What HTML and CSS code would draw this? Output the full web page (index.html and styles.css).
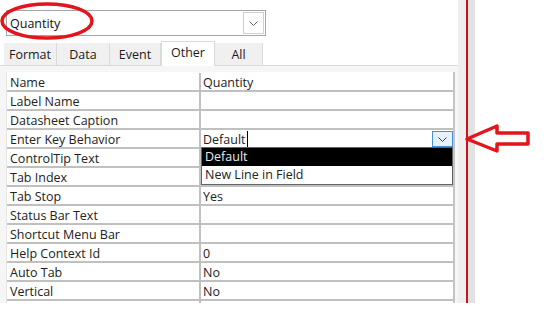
FILE: index.html
```html
<!DOCTYPE html>
<html lang="en">
  <head>
    <meta charset="UTF-8" />
    <title>Property Sheet - Other</title>
    <link rel="stylesheet" href="styles.css">
  </head>
  <body>
    <div class="page">
      <section class="panel">
        <!-- selector del control -->
        <div class="combo">
          <span class="combo-text">Quantity</span>
          <span class="combo-btn">
            <svg width="9" height="5" viewBox="0 0 9 5"><polyline points="0.5,0.5 4.5,4.5 8.5,0.5" fill="none" stroke="#606060" stroke-width="1"/></svg>
          </span>
        </div>
        <nav class="tabs">
          <a class="tab">Format</a>
          <a class="tab">Data</a>
          <a class="tab">Event</a>
          <a class="tab active">Other</a>
          <a class="tab">All</a>
        </nav>
        <div class="sheet">
          <div class="grid">
            <div class="row first"><div class="label">Name</div><div class="value">Quantity</div></div>
            <div class="row"><div class="label">Label Name</div><div class="value"></div></div>
            <div class="row"><div class="label">Datasheet Caption</div><div class="value"></div></div>
            <div class="row open">
              <div class="label">Enter Key Behavior</div>
              <div class="value">
                <span class="caret">Default</span>
                <span class="drop-btn">
                  <svg width="9" height="5" viewBox="0 0 9 5"><polyline points="0.5,0.5 4.5,4.5 8.5,0.5" fill="none" stroke="#404040" stroke-width="1"/></svg>
                </span>
                <ul class="drop-list">
                  <li class="selected">Default</li>
                  <li>New Line in Field</li>
                </ul>
              </div>
            </div>
            <div class="row"><div class="label">ControlTip Text</div><div class="value"></div></div>
            <div class="row"><div class="label">Tab Index</div><div class="value"></div></div>
            <div class="row"><div class="label">Tab Stop</div><div class="value">Yes</div></div>
            <div class="row"><div class="label">Status Bar Text</div><div class="value"></div></div>
            <div class="row"><div class="label">Shortcut Menu Bar</div><div class="value"></div></div>
            <div class="row"><div class="label">Help Context Id</div><div class="value">0</div></div>
            <div class="row"><div class="label">Auto Tab</div><div class="value">No</div></div>
            <div class="row"><div class="label">Vertical</div><div class="value">No</div></div>
            <div class="row"><div class="label"></div><div class="value"></div></div>
          </div>
        </div>
      </section>
      <div class="strip"></div>
    </div>
    <!-- anotaciones en rojo -->
    <svg class="marks" width="550" height="316" viewBox="0 0 550 316">
      <ellipse cx="47" cy="21" rx="45" ry="17" fill="none" stroke="#e3141b" stroke-width="3.5"/>
      <polygon points="467,139 497,126 497,133 528,133 528,144 497,144 497,151" fill="none" stroke="#e3141b" stroke-width="3.5" stroke-linejoin="round"/>
    </svg>
  </body>
</html>
```

FILE: styles.css
```css
html {
  box-sizing: border-box;
  font-family: "Open Sans", "Noto Sans", sans-serif;
  font-size: 12.5px;
}

*,
*:before,
*:after {
  box-sizing: inherit;
}

body {
  margin: 0;
  width: 550px;
  height: 316px;
  background-color: #fff;
  color: #222;
  position: relative;
  overflow: hidden;
}

.page {
  display: flex;
  height: 303px;
  overflow: hidden;
}

.panel {
  width: 458px;
  display: flex;
  flex-direction: column;
}

/* caja combinada de arriba */
.combo {
  flex-shrink: 0;
  margin: 10px 0 0 6px;
  width: 260px;
  height: 26px;
  border: 1px solid #a6a6a6;
  display: flex;
  align-items: center;
  justify-content: space-between;
  padding: 0 1px 0 3px;
}

.combo-text {
  font-size: 12.5px;
  color: #111;
}

.combo-btn {
  width: 21px;
  height: 22px;
  border: 1px solid #d0d0d0;
  display: flex;
  align-items: center;
  justify-content: center;
}

.tabs {
  flex-shrink: 0;
  display: flex;
  margin: 7px 0 0 4px;
  height: 22px;
  position: relative;
  z-index: 1;
}

.tab {
  height: 22px;
  background-color: #f0f0f0;
  border-right: 1px solid #dadada;
  display: flex;
  align-items: center;
  justify-content: center;
  font-size: 12.5px;
  color: #1a1a1a;
}

.tab:nth-child(1) { width: 53px; }
.tab:nth-child(2) { width: 53px; }
.tab:nth-child(3) { width: 51px; }
.tab:nth-child(4) { width: 54px; }
.tab:nth-child(5) { width: 48px; }

.tab.active {
  background-color: #fff;
  height: 25px;
  margin-top: -2px;
  border: 1px solid #dadada;
  border-bottom: none;
  padding-bottom: 3px;
}

.sheet {
  flex-grow: 1;
  min-height: 0;
  overflow: hidden;
  background-color: #f6f6f6;
  border-top: 1px solid #dadada;
  padding: 6px 3px 0 6px;
}

.grid {
  background-color: #fff;
  border-right: 2px solid #c4c4c4;
  border-left: 1px solid #e6e6e6;
}

.row {
  display: grid;
  grid-template-columns: 192px 1fr;
  height: 19px;
  border-bottom: 2px solid #c0c0c0;
  line-height: 17px;
}

.row.first {
  height: 20px;
  padding-top: 1px;
}

.label {
  padding-left: 3px;
  padding-top: 1px;
}

.value {
  border-left: 2px solid #c0c0c0;
  padding-left: 2px;
  padding-top: 1px;
  position: relative;
}

.open .value {
  z-index: 2;
}

.caret {
  border-right: 1px solid #000;
  padding-right: 1px;
}

.drop-btn {
  position: absolute;
  right: 0;
  top: 1px;
  width: 21px;
  height: 16px;
  border: 1px solid #4a90d9;
  background-color: #e5f1fb;
  display: flex;
  align-items: center;
  justify-content: center;
}

/* lista desplegable abierta */
.drop-list {
  position: absolute;
  top: 17px;
  left: 0;
  right: 0;
  margin: 0;
  padding: 0;
  list-style: none;
  background-color: #fff;
  border: 1px solid #646464;
}

.drop-list li {
  height: 18px;
  line-height: 18px;
  padding-left: 3px;
}

.drop-list .selected {
  background-color: #000;
  color: #e6eef2;
}

.strip {
  width: 17px;
  background: linear-gradient(to right, #efefef 0, #efefef 8px, #c8141c 8px, #c8141c 10px, #e2e2e2 10px);
}

.marks {
  position: absolute;
  top: 0;
  left: 0;
  pointer-events: none;
}
```
